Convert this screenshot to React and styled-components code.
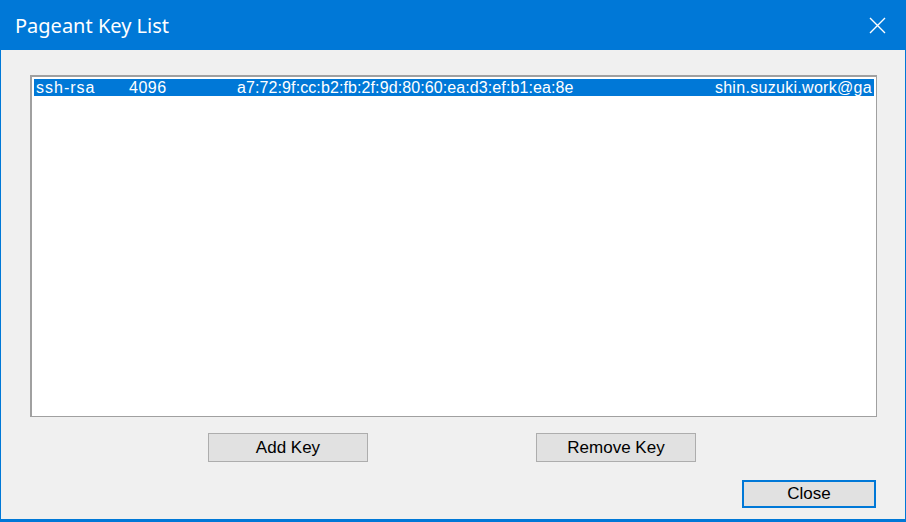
import styled, { createGlobalStyle } from "styled-components";

const GlobalStyle = createGlobalStyle`
  html, body {
    margin: 0;
    padding: 0;
    background: #f0f0f0;
  }
`;

const Window = styled.div`
  width: 906px;
  height: 522px;
  box-sizing: border-box;
  display: flex;
  flex-direction: column;
  background: #f0f0f0;
  border: 1px solid #0078d7;
  border-top: none;
  border-bottom-width: 3px;
  overflow: hidden;
`;

const TitleBar = styled.div`
  height: 50px;
  flex: none;
  display: flex;
  align-items: center;
  justify-content: space-between;
  background: #0078d7;
  color: #ffffff;
  padding: 0 19px 0 14px;
  font-family: "Noto Sans", "Open Sans", sans-serif;
  font-size: 20px;
`;

const Body = styled.div`
  flex: 1;
  display: flex;
  flex-direction: column;
  padding: 25px 29px 0 29px;
`;

const ListBox = styled.div`
  height: 342px;
  box-sizing: border-box;
  margin-right: -1px;
  background: #ffffff;
  border: 1px solid #a0a0a0;
  box-shadow: inset 1px 1px 0 #a0a0a0;
  padding: 3px 2px 0 3px;
`;

const Row = styled.div`
  display: grid;
  grid-template-columns: 93px 108px 470px 1fr;
  height: 17px;
  line-height: 17px;
  align-items: center;
  padding: 0 2px 0 2px;
  background: ${(p) => (p.selected ? "#0078d7" : "transparent")};
  color: ${(p) => (p.selected ? "#ffffff" : "#000000")};
  font-family: "Liberation Sans", Arial, sans-serif;
  font-size: 16px;
  white-space: nowrap;
  overflow: hidden;
`;

const Cell = styled.span`
  text-align: ${(p) => (p.right ? "right" : "left")};
  letter-spacing: ${(p) => p.spacing || "0"};
`;

const ButtonRow = styled.div`
  display: flex;
  justify-content: center;
  gap: 168px;
  margin-top: 16px;
  padding-right: 2px;
`;

const Button = styled.button`
  width: ${(p) => p.w || 160}px;
  height: ${(p) => p.h || 29}px;
  box-sizing: border-box;
  background: #e1e1e1;
  border: ${(p) => (p.primary ? "2px solid #0078d7" : "1px solid #adadad")};
  font-family: "Liberation Sans", Arial, sans-serif;
  font-size: 17px;
  color: #000000;
  padding: 0;
  margin: 0;
`;

const Footer = styled.div`
  display: flex;
  justify-content: flex-end;
  margin-top: 18px;
`;

function CloseIcon() {
  return (
    <svg width="17" height="17" viewBox="0 0 17 17">
      <path d="M1 1 L16 16 M16 1 L1 16" stroke="#ffffff" strokeWidth="1.4" />
    </svg>
  );
}

export default function App() {
  return (
    <>
      <GlobalStyle />
      <Window>
        <TitleBar>
          <span>Pageant Key List</span>
          <CloseIcon />
        </TitleBar>
        <Body>
          <ListBox>
            <Row selected>
              <Cell spacing="1px">ssh-rsa</Cell>
              <Cell spacing="0.5px">4096</Cell>
              <Cell spacing="0.1px">a7:72:9f:cc:b2:fb:2f:9d:80:60:ea:d3:ef:b1:ea:8e</Cell>
              <Cell right spacing="0.3px">shin.suzuki.work@ga</Cell>
            </Row>
          </ListBox>
          <ButtonRow>
            <Button>Add Key</Button>
            <Button>Remove Key</Button>
          </ButtonRow>
          <Footer>
            <Button primary w={134} h={28}>Close</Button>
          </Footer>
        </Body>
      </Window>
    </>
  );
}
